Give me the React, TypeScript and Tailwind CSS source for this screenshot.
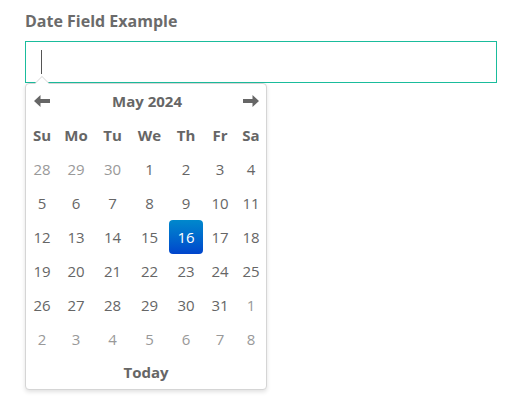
const font = { fontFamily: '"Open Sans", "Noto Sans", sans-serif' };

type Day = { n: number; muted?: boolean; active?: boolean };

const weeks: Day[][] = [
  [{ n: 28, muted: true }, { n: 29, muted: true }, { n: 30, muted: true }, { n: 1 }, { n: 2 }, { n: 3 }, { n: 4 }],
  [{ n: 5 }, { n: 6 }, { n: 7 }, { n: 8 }, { n: 9 }, { n: 10 }, { n: 11 }],
  [{ n: 12 }, { n: 13 }, { n: 14 }, { n: 15 }, { n: 16, active: true }, { n: 17 }, { n: 18 }],
  [{ n: 19 }, { n: 20 }, { n: 21 }, { n: 22 }, { n: 23 }, { n: 24 }, { n: 25 }],
  [{ n: 26 }, { n: 27 }, { n: 28 }, { n: 29 }, { n: 30 }, { n: 31 }, { n: 1, muted: true }],
  [
    { n: 2, muted: true },
    { n: 3, muted: true },
    { n: 4, muted: true },
    { n: 5, muted: true },
    { n: 6, muted: true },
    { n: 7, muted: true },
    { n: 8, muted: true },
  ],
];

const dayNames = ['Su', 'Mo', 'Tu', 'We', 'Th', 'Fr', 'Sa'];

function Arrow({ dir }: { dir: 'left' | 'right' }) {
  return (
    <svg width="16" height="12" viewBox="0 0 16 12" className={dir === 'right' ? 'rotate-180' : ''}>
      <path d="M0 6 L6.5 0 L6.5 4 L16 4 L16 8 L6.5 8 L6.5 12 Z" fill="#666666" />
    </svg>
  );
}

export default function App() {
  return (
    <div className="w-[506px] h-[412px] bg-white pt-[10px] pl-[25px] text-[#666]" style={font}>
      <div className="text-[16px] font-bold leading-[22px] text-[#6b6b6b]">Date Field Example</div>

      <div className="relative mt-[9px] w-[472px]">
        {/* Input */}
        <div className="h-[42px] border border-[#1abc9c] flex items-center pl-[15px]">
          <div className="w-px h-[24px] bg-[#555]" />
        </div>

        {/* Picker */}
        <div className="absolute left-0 top-[42px] w-[242px] bg-white border border-[#d5d5d5] rounded-[4px] shadow-[0_2px_4px_rgba(0,0,0,0.12)]">
          {/* pointer */}
          <div className="absolute left-[8px] -top-[8px] w-0 h-0 border-x-[8px] border-x-transparent border-b-[8px] border-b-[#d5d5d5]" />
          <div className="absolute left-[9px] -top-[7px] w-0 h-0 border-x-[7px] border-x-transparent border-b-[7px] border-b-white" />

          <div className="grid grid-cols-[32px_36px_37px_37px_36px_32px_30px] text-[15px]">
            {/* header */}
            <div className="h-[34px] flex items-center justify-center">
              <Arrow dir="left" />
            </div>
            <div className="col-span-5 h-[34px] flex items-center justify-center font-bold text-[#666]">
              May 2024
            </div>
            <div className="h-[34px] flex items-center justify-center">
              <Arrow dir="right" />
            </div>

            {dayNames.map((d) => (
              <div key={d} className="h-[34px] flex items-center justify-center font-bold text-[#666]">
                {d}
              </div>
            ))}

            {weeks.flat().map((d, i) =>
              d.active ? (
                <div key={i} className="h-[34px] px-px flex">
                  <div className="flex-1 flex items-center justify-center rounded-[4px] bg-gradient-to-b from-[#0088cc] to-[#0044cc] text-white">
                    {d.n}
                  </div>
                </div>
              ) : (
                <div
                  key={i}
                  className={`h-[34px] flex items-center justify-center ${d.muted ? 'text-[#999]' : 'text-[#666]'}`}
                >
                  {d.n}
                </div>
              ),
            )}

            <div className="col-span-7 h-[33px] flex items-center justify-center font-bold text-[#666]">
              Today
            </div>
          </div>
        </div>
      </div>
    </div>
  );
}
